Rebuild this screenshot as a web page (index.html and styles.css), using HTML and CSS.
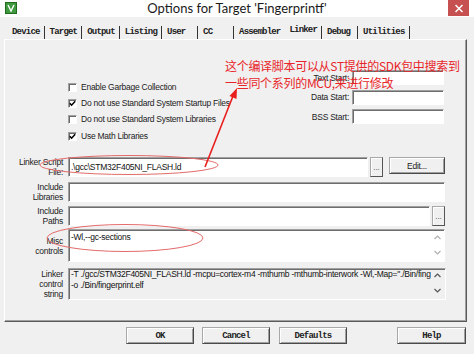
FILE: index.html
```html
<!DOCTYPE html>
<html>
<head>
<meta charset="utf-8">
<link rel="stylesheet" href="styles.css">
</head>
<body>
<div class="titlebar">
  <svg class="app-icon" width="12" height="12" viewBox="0 0 12 12"><rect x="0.5" y="0.5" width="11" height="11" fill="#3f9a3f" stroke="#1e6a1e"/><polyline points="3,3 6,9 9,3" fill="none" stroke="#fff" stroke-width="1.4"/></svg>
  <div class="title">Options for Target 'Fingerprintf'</div>
  <div class="close"><svg width="10" height="9" viewBox="0 0 10 9"><path d="M1.5 1 L8.5 8 M8.5 1 L1.5 8" stroke="#fff" stroke-width="1.5"/></svg></div>
</div>

<div class="tabs">
  <span class="tab">Device</span>
  <span class="tab">Target</span>
  <span class="tab">Output</span>
  <span class="tab">Listing</span>
  <span class="tab">User</span>
  <span class="tab">CC</span>
  <span class="tab tab-nosep">Assembler</span>
  <span class="tab tab-active"><span class="tab-label">Linker</span></span>
  <span class="tab">Debug</span>
  <span class="tab">Utilities</span>
</div>

<div class="panel">
  <div class="row row-upper">
    <div></div>
    <div class="upper">
      <div class="checks">
        <div class="check"><span class="box"></span><span>Enable Garbage Collection</span></div>
        <div class="check"><span class="box"><svg width="7" height="7" viewBox="0 0 7 7"><path d="M0.8 3.2 L2.6 5.2 L6.2 1.2" fill="none" stroke="#000" stroke-width="1.5"/></svg></span><span>Do not use Standard System Startup Files</span></div>
        <div class="check"><span class="box"></span><span>Do not use Standard System Libraries</span></div>
        <div class="check check-last"><span class="box"><svg width="7" height="7" viewBox="0 0 7 7"><path d="M0.8 3.2 L2.6 5.2 L6.2 1.2" fill="none" stroke="#000" stroke-width="1.5"/></svg></span><span>Use Math Libraries</span></div>
      </div>
      <div class="starts">
        <span class="start-label">Text Start:</span><span class="field start-field"></span>
        <span class="start-label">Data Start:</span><span class="field start-field"></span>
        <span class="start-label">BSS Start:</span><span class="field start-field"></span>
      </div>
    </div>
  </div>

  <div class="row row-ls">
    <div class="row-label">Linker Script<br>File:</div>
    <div class="cell">
      <div class="field text-field">.\gcc\STM32F405NI_FLASH.ld</div>
      <div class="browse">...</div>
      <div class="btn btn-edit">Edit...</div>
    </div>
  </div>

  <div class="row row-il">
    <div class="row-label">Include<br>Libraries</div>
    <div class="cell"><div class="field"></div></div>
  </div>

  <div class="row row-ip">
    <div class="row-label">Include<br>Paths</div>
    <div class="cell">
      <div class="field"></div>
      <div class="browse">...</div>
    </div>
  </div>

  <div class="row row-misc">
    <div class="row-label">Misc<br>controls</div>
    <div class="cell">
      <div class="field area">
        <div class="area-text misc-text">-Wl,--gc-sections</div>
        <div class="scroll">
          <svg width="7" height="5" viewBox="0 0 7 5"><path d="M0.5 4 L3.5 1 L6.5 4" fill="none" stroke="#b0b0b0" stroke-width="1.2"/></svg>
          <svg width="7" height="5" viewBox="0 0 7 5"><path d="M0.5 1 L3.5 4 L6.5 1" fill="none" stroke="#b0b0b0" stroke-width="1.2"/></svg>
        </div>
      </div>
    </div>
  </div>

  <div class="row row-lc">
    <div class="row-label">Linker<br>control<br>string</div>
    <div class="cell">
      <div class="field area readonly">
        <div class="area-text lc-text">-T ./gcc/STM32F405NI_FLASH.ld -mcpu=cortex-m4 -mthumb -mthumb-interwork -Wl,-Map="./Bin/fing<br>-o ./Bin/fingerprint.elf</div>
        <div class="scroll scroll-lc">
          <svg width="7" height="5" viewBox="0 0 7 5"><path d="M0.5 4 L3.5 1 L6.5 4" fill="none" stroke="#555" stroke-width="1.2"/></svg>
          <svg width="7" height="5" viewBox="0 0 7 5"><path d="M0.5 1 L3.5 4 L6.5 1" fill="none" stroke="#555" stroke-width="1.2"/></svg>
        </div>
      </div>
    </div>
  </div>
</div>

<div class="buttons">
  <div class="btn btn-ok">OK</div>
  <div class="btn btn-cancel">Cancel</div>
  <div class="btn btn-defaults">Defaults</div>
  <div class="btn btn-help">Help</div>
</div>

<div class="annot">这个编译脚本可以从ST提供的SDK包中搜索到<br>一些同个系列的MCU,来进行修改</div>

<svg class="overlay" width="474" height="354" viewBox="0 0 474 354">
  <ellipse cx="129" cy="165" rx="89" ry="9.5" fill="none" stroke="#e46a6a" stroke-width="1"/>
  <ellipse cx="125" cy="238" rx="78" ry="13.5" fill="none" stroke="#e46a6a" stroke-width="1"/>
  <line x1="205" y1="167" x2="233" y2="96" stroke="#ea1d1d" stroke-width="1.6"/>
  <polygon points="237,88 236.5,99 229.5,96" fill="#ea1d1d"/>
</svg>
</body>
</html>
```

FILE: styles.css
```css
* { box-sizing: border-box; }
html, body { margin: 0; padding: 0; }
body {
  width: 474px;
  height: 354px;
  overflow: hidden;
  position: relative;
  background: #f0f0f0;
  font-family: "Liberation Sans", Arial, sans-serif;
  font-size: 8.5px;
  letter-spacing: -0.25px;
  color: #000;
}

.titlebar {
  height: 17px;
  background: #fff;
  display: grid;
  grid-template-columns: 1fr auto 1fr;
  align-items: start;
}
.app-icon { margin: 2px 0 0 5px; display: block; }
.title {
  font-family: "Lato", "Noto Sans", sans-serif;
  font-size: 13px;
  letter-spacing: 0;
  line-height: 16px;
  color: #1a1a1a;
}
.close {
  justify-self: end;
  width: 21px;
  height: 16px;
  margin-right: 5px;
  background: #c75050;
  display: flex;
  align-items: center;
  justify-content: center;
}

.tabs {
  display: flex;
  margin: 9px 0 0 7px;
  height: 13px;
  font-family: "Liberation Mono", monospace;
  font-weight: bold;
  font-size: 9px;
  letter-spacing: -0.8px;
  color: #222;
}
.tab {
  min-width: 36px;
  padding: 0 4px 0 5px;
  border-right: 1px solid #333;
  line-height: 13px;
}
.tab-nosep { border-right: none; }
.tab-label { display: block; margin-top: -2px; }

.panel {
  margin-left: 4px;
  width: 463px;
  height: 283px;
  border: 1px solid;
  border-color: #fff #5a5a5a #5a5a5a #fff;
  box-shadow: inset -1px -1px 0 #a0a0a0;
  display: flex;
  flex-direction: column;
}

.row {
  display: grid;
  grid-template-columns: 58px 377px;
  column-gap: 5px;
}
.row-label {
  text-align: right;
  line-height: 10px;
  align-self: center;
  color: #222;
}
.cell { display: flex; height: 100%; }

.upper { display: flex; justify-content: space-between; }
.checks { padding-top: 39px; }
.check {
  display: flex;
  align-items: center;
  height: 16px;
  gap: 4px;
  color: #222;
}
.check-last { margin-top: 1px; }
.box {
  width: 9px;
  height: 9px;
  background: #fff;
  border: 1px solid;
  border-color: #a0a0a0 #fff #fff #a0a0a0;
  box-shadow: inset 1px 1px 0 #696969;
  display: flex;
  align-items: center;
  justify-content: center;
}

.starts {
  padding-top: 30px;
  display: grid;
  grid-template-columns: auto 92px;
  column-gap: 3px;
  row-gap: 4.5px;
  align-content: start;
  margin-right: 1px;
}
.start-label { text-align: right; align-self: center; color: #222; }
.start-field { height: 15px; }

.field {
  flex: 1;
  background: #fff;
  border: 1px solid;
  border-color: #a0a0a0 #fff #fff #a0a0a0;
  box-shadow: inset 1px 1px 0 #6d6d6d;
}
.text-field {
  padding-left: 2px;
  display: flex;
  align-items: center;
  color: #111;
  white-space: nowrap;
  overflow: hidden;
}

.row-ls { margin-top: 13px; height: 17px; }
.row-il { margin-top: 8px; height: 16px; }
.row-ip { margin-top: 8px; height: 17px; }
.row-misc { margin-top: 6px; height: 33px; }
.row-lc { margin-top: 6px; height: 32px; }

.browse {
  width: 13px;
  margin-left: 2px;
  background: #f0f0f0;
  border: 1px solid;
  border-color: #a8a8a8 #555 #555 #a8a8a8;
  box-shadow: inset 1px 1px 0 #fff;
  font-size: 8px;
  line-height: 8px;
  letter-spacing: 0;
  text-align: center;
  padding-top: 6px;
  color: #444;
}

.btn {
  height: 17px;
  background: #f0f0f0;
  border: 1px solid;
  border-color: #a8a8a8 #4a4a4a #4a4a4a #a8a8a8;
  box-shadow: inset 1px 1px 0 #fff, inset -1px -1px 0 #a0a0a0;
  display: flex;
  align-items: center;
  justify-content: center;
  font-family: "Liberation Mono", monospace;
  font-weight: bold;
  font-size: 9px;
  letter-spacing: -0.8px;
  color: #222;
}
.btn-edit {
  width: 56px;
  margin-left: 6px;
  font-family: "Liberation Sans", Arial, sans-serif;
  font-weight: normal;
  font-size: 8.5px;
  letter-spacing: -0.25px;
}

.area { display: flex; }
.area-text {
  flex: 1;
  overflow: hidden;
  white-space: nowrap;
  padding-left: 2px;
  color: #111;
}
.misc-text { padding-top: 2px; line-height: 11px; }
.lc-text { line-height: 10.5px; }
.readonly { background: #f0f0f0; }
.scroll {
  width: 14px;
  display: flex;
  flex-direction: column;
  justify-content: space-between;
  align-items: center;
  padding: 5px 0 6px;
}
.scroll-lc { padding: 4px 0 6px; }

.buttons {
  display: flex;
  margin-top: 5px;
  height: 17px;
}
.btn-ok { width: 68px; margin-left: 126px; }
.btn-cancel { width: 68px; margin-left: 8px; }
.btn-defaults { width: 68px; margin-left: 9px; }
.btn-help { width: 69px; margin-left: 50px; }

.annot {
  position: absolute;
  left: 225px;
  top: 57px;
  color: #e8262a;
  font-family: "Noto Sans CJK SC", sans-serif;
  font-size: 12px;
  letter-spacing: -0.3px;
  line-height: 17px;
  white-space: nowrap;
}
.overlay {
  position: absolute;
  left: 0;
  top: 0;
  pointer-events: none;
}
```
